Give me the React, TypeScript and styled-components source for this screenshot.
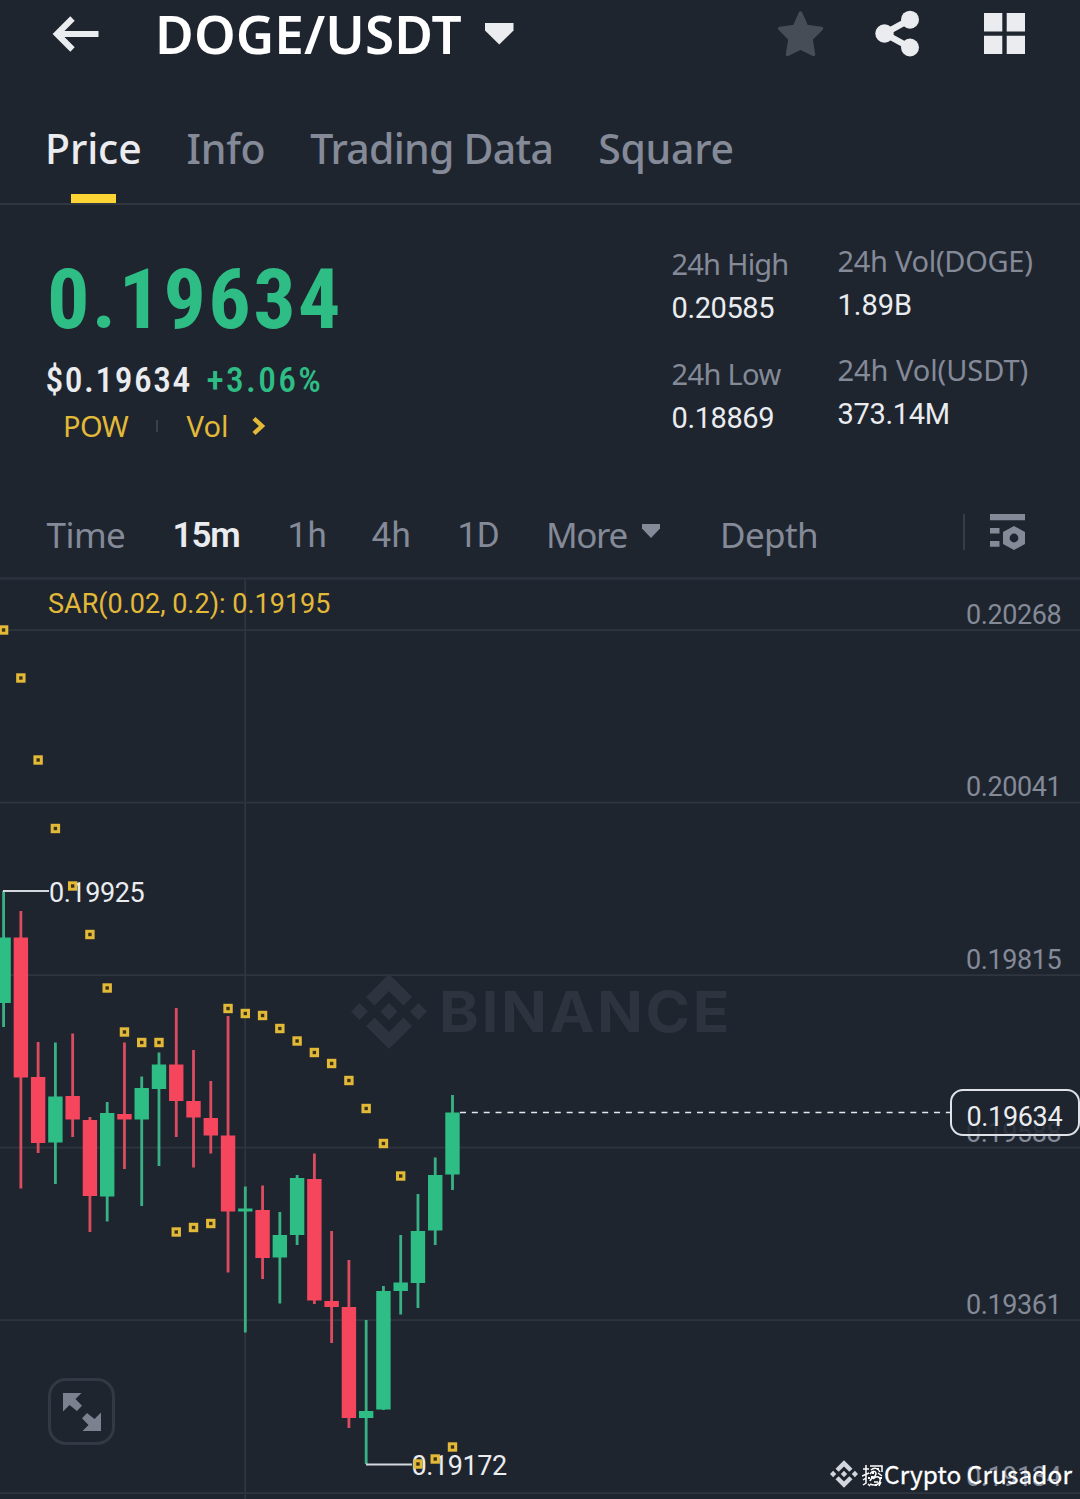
import React from "react";
import styled, { createGlobalStyle, css } from "styled-components";

const color = {
  bg: "#1f252f",
  line: "#2f353f",
  text: "#eaecef",
  bright: "#ffffff",
  muted: "#848a97",
  green: "#2ebd85",
  red: "#f6465d",
  gold: "#e3b938",
  accent: "#fcd535",
  mark: "#2d343f",
};

const sans = `"Noto Sans", "Open Sans", sans-serif`;
const digits = `Roboto, "Noto Sans", sans-serif`;

const GlobalStyle = createGlobalStyle`
  body { margin: 0; background: ${color.bg}; }
  * { box-sizing: border-box; }
`;

const Screen = styled.main`
  width: 1080px;
  height: 1499px;
  overflow: hidden;
  display: flex;
  flex-direction: column;
  background: ${color.bg};
  color: ${color.text};
  font-family: ${sans};
  white-space: nowrap;
`;

const Header = styled.header`
  height: 68px;
  display: flex;
  align-items: center;
  padding: 0 54px 0 52px;
`;

const PairName = styled.h1`
  margin: 0 23.5px 0 55px;
  font-size: 53px;
  line-height: 68px;
  font-weight: 600;
  letter-spacing: 0.1px;
  color: ${color.bright};
`;

const HeaderActions = styled.div`
  margin-left: auto;
  display: flex;
  align-items: center;
`;

const ActionIcon = styled.svg<{ $gap?: number }>`
  display: block;
  margin-left: ${(p) => p.$gap ?? 0}px;
`;

const Tabs = styled.nav`
  height: 137px;
  display: flex;
  gap: 45px;
  padding: 51.5px 45px 0;
  border-bottom: 2px solid #313741;
`;

const Tab = styled.a<{ $active?: boolean; $spacing?: number }>`
  display: flex;
  flex-direction: column;
  align-items: center;
  justify-content: space-between;
  font-size: 41px;
  line-height: 56px;
  font-weight: 500;
  letter-spacing: ${(p) => p.$spacing ?? 0}px;
  color: ${(p) => (p.$active ? color.text : color.muted)};
`;

const TabIndicator = styled.span`
  width: 45px;
  height: 9px;
  background: ${color.accent};
`;

const Summary = styled.section`
  height: 275px;
  display: flex;
  padding-left: 47px;
`;

const PriceColumn = styled.div`
  width: 624.5px;
  padding-top: 46px;
`;

const LastPrice = styled.div`
  font-family: ${digits};
  font-stretch: 75%;
  font-size: 84px;
  line-height: 98px;
  font-weight: 700;
  letter-spacing: 2.4px;
  color: ${color.green};
`;

const FiatRow = styled.div`
  display: flex;
  margin: 9.5px 0 0 -1.5px;
  font-family: ${digits};
  font-stretch: 75%;
  font-size: 35.5px;
  line-height: 42px;
  font-weight: 500;
`;

const FiatPrice = styled.span`
  width: 161px;
  letter-spacing: 1.5px;
`;

const Change = styled.span`
  color: ${color.green};
  letter-spacing: 2.3px;
`;

const TagRow = styled.div`
  display: flex;
  align-items: center;
  margin: 5.3px 0 0 16px;
  font-size: 29px;
  line-height: 40px;
  color: ${color.gold};
`;

const TagName = styled.span<{ $spacing?: number }>`
  letter-spacing: ${(p) => p.$spacing ?? 0}px;
`;

const TagDivider = styled.span`
  width: 2px;
  height: 12px;
  margin: 0 28.5px 0 28px;
  background: #3a404b;
`;

const StatColumn = styled.dl<{ $top: number; $width?: number }>`
  margin: 0;
  width: ${(p) => p.$width ?? 240}px;
  padding-top: ${(p) => p.$top}px;
`;

const StatLabel = styled.dt<{ $spacing: number; $above?: number }>`
  font-size: 29px;
  line-height: 40px;
  color: ${color.muted};
  letter-spacing: ${(p) => p.$spacing}px;
  margin-top: ${(p) => p.$above ?? 0}px;
`;

const StatValue = styled.dd<{ $spacing?: number }>`
  margin: 6.7px 0 0;
  font-family: ${digits};
  font-size: 29px;
  line-height: 34px;
  letter-spacing: ${(p) => p.$spacing ?? -0.4}px;
  color: ${color.text};
`;

const Intervals = styled.nav`
  height: 97px;
  display: flex;
  padding: 31px 54px 0 46.5px;
`;

const Interval = styled.a<{ $width: number; $digits?: boolean; $active?: boolean; $spacing?: number }>`
  width: ${(p) => p.$width}px;
  display: flex;
  align-items: baseline;
  font-size: 35px;
  line-height: 48px;
  letter-spacing: ${(p) => p.$spacing ?? 0}px;
  color: ${(p) => (p.$active ? color.text : color.muted)};
  ${(p) =>
    p.$digits &&
    css`
      font-family: ${digits};
      padding-top: 1.4px;
    `}
  ${(p) => p.$active && css`font-weight: 600;`}
`;

const CaretDown = styled.svg`
  display: block;
  margin-left: 15px;
  align-self: flex-start;
  margin-top: 13px;
`;

const Settings = styled.div`
  margin-left: auto;
  height: 36px;
  margin-top: 3px;
  display: flex;
  gap: 25px;
  align-items: center;
`;

const SettingsDivider = styled.span`
  width: 2px;
  height: 36px;
  background: #373d48;
`;

const ChartPanel = styled.section`
  position: relative;
  height: 922px;
`;

const ChartSvg = styled.svg`
  display: block;
`;

const AxisText = styled.text<{ $spacing?: number }>`
  font-family: ${digits};
  font-size: 27px;
  letter-spacing: ${(p) => p.$spacing ?? -0.4}px;
`;

const Wordmark = styled.text`
  font-family: Inter, "Noto Sans", sans-serif;
  font-size: 56.5px;
  font-weight: 700;
  letter-spacing: 2.4px;
  fill: ${color.mark};
`;

const PriceTag = styled.div`
  position: absolute;
  left: 949.5px;
  top: 512px;
  width: 130px;
  height: 47px;
  padding: 10px 0 0 15px;
  border: 2px solid #dfe2e8;
  border-radius: 13px;
  background: rgba(31, 37, 47, 0.86);
  font-family: ${digits};
  font-size: 27px;
  line-height: 32px;
  letter-spacing: -0.35px;
  color: ${color.text};
`;

const ExpandButton = styled.button`
  position: absolute;
  left: 48px;
  top: 801px;
  width: 67px;
  height: 67px;
  padding: 0;
  display: grid;
  place-items: center;
  border: 3px solid #323944;
  border-radius: 18px;
  background: transparent;
`;

const Credit = styled.div`
  position: absolute;
  left: 830px;
  top: 879px;
  display: flex;
  align-items: center;
  height: 36px;
  font-family: "Noto Sans CJK SC", "Noto Sans", sans-serif;
  font-size: 24.4px;
  font-weight: 400;
  line-height: 36px;
  letter-spacing: 0.1px;
  color: #ffffff;
  -webkit-text-stroke: 0.3px #ffffff;
`;

const CreditGlyph = styled.svg`
  display: block;
  margin: 2px 1px 0 4px;
`;

type Candle = [up: 0 | 1, high: number, low: number, top: number, bottom: number];

const candles: Candle[] = [
  [1, 891, 1027, 937.5, 1003],
  [0, 911, 1188.5, 937.5, 1077.5],
  [0, 1042, 1153, 1077, 1143],
  [1, 1042.5, 1184, 1096.5, 1142.5],
  [0, 1033.5, 1137, 1096, 1119.5],
  [0, 1117, 1232, 1120, 1196],
  [1, 1102, 1221.5, 1113, 1196.5],
  [0, 1042.5, 1169, 1114, 1119.5],
  [1, 1076.5, 1206, 1088, 1119.5],
  [1, 1052.5, 1166, 1064.5, 1089],
  [0, 1008, 1137, 1064.5, 1101],
  [0, 1050, 1167.5, 1101, 1117.5],
  [0, 1081, 1153.5, 1118, 1135.5],
  [0, 1016, 1272.5, 1135.5, 1211.5],
  [1, 1186.5, 1332.5, 1208.5, 1211.5],
  [0, 1185.5, 1279, 1210, 1258],
  [1, 1212, 1303.5, 1235, 1257.5],
  [1, 1175, 1245, 1178, 1235],
  [0, 1153.5, 1304, 1179, 1300.5],
  [0, 1231, 1343, 1301, 1307],
  [0, 1260, 1428, 1307, 1418],
  [1, 1320, 1464, 1411, 1418],
  [1, 1286, 1410, 1291, 1409.5],
  [1, 1235, 1314.5, 1282.5, 1291],
  [1, 1194, 1308, 1231, 1283],
  [1, 1157.5, 1245, 1175, 1230.5],
  [1, 1095, 1190, 1112.5, 1174.5],
];

const sar = [
  630, 678, 760, 828.5, 886, 934.5, 988, 1032, 1042.5, 1042.5, 1232, 1227.5, 1223.5, 1008.5,
  1013.5, 1015.5, 1028.5, 1041, 1052.5, 1063.5, 1080.5, 1108.5, 1143.5, 1176, 1464, 1459, 1447,
];

const axis: [label: string, y: number][] = [
  ["0.20268", 624],
  ["0.20041", 796],
  ["0.19815", 969],
  ["0.19588", 1142],
  ["0.19361", 1314],
  ["0.19134", 1486],
];

const gridLines = [630, 802.5, 975, 1147.5, 1320, 1493];

const candleX = (i: number) => 3.6 + i * 17.265;

function BinanceDiamond() {
  return (
    <>
      <path d="M0-37.5 23-14.5 14.5-6 0-20.5-14.5-6-23-14.5Z" />
      <path d="M0 37.5 23 14.5 14.5 6 0 20.5-14.5 6-23 14.5Z" />
      <path d="M0-8.5 8.5 0 0 8.5-8.5 0Z" />
      <path d="M-29.5-8.5-21 0-29.5 8.5-38 0Z" />
      <path d="M29.5-8.5 38 0 29.5 8.5 21 0Z" />
    </>
  );
}

function Chart() {
  return (
    <ChartSvg width="1080" height="922" viewBox="0 577 1080 922">
      <rect x="0" y="577" width="1080" height="3" fill="#2a303b" />
      {gridLines.map((y) => (
        <rect key={y} x="0" y={y - 0.8} width="1080" height="1.8" fill={color.line} />
      ))}
      <rect x="244.3" y="580" width="1.8" height="919" fill={color.line} />

      <g transform="translate(389 1011.5)" fill={color.mark}>
        <BinanceDiamond />
      </g>
      <Wordmark x="439" y="1032" textLength="293" lengthAdjust="spacingAndGlyphs">
        BINANCE
      </Wordmark>

      {axis.map(([label, y]) => (
        <AxisText key={label} x="966" y={y} fill={color.muted}>
          {label}
        </AxisText>
      ))}

      {candles.map(([up, high, low, top, bottom], i) => (
        <g key={i} fill={up ? color.green : color.red}>
          <rect
            x={candleX(i) - 1.4}
            y={high}
            width="2.8"
            height={low - high}
            fill={up ? "#38b284" : "#dc4c60"}
          />
          <rect x={candleX(i) - 7.2} y={top} width="14.4" height={bottom - top} />
        </g>
      ))}

      <rect x="3" y="890" width="46" height="2" fill="#d5d8de" />
      <AxisText x="49" y="902" fill={color.text}>0.19925</AxisText>
      <rect x="366" y="1463.5" width="46" height="2" fill="#d5d8de" />
      <AxisText x="411.5" y="1475" fill={color.text}>0.19172</AxisText>

      {sar.map((y, i) => (
        <rect
          key={i}
          x={candleX(i) - 3.2}
          y={y - 3.2}
          width="6.4"
          height="6.4"
          fill="#3a3118"
          stroke={color.gold}
          strokeWidth="3"
        />
      ))}

      <path d="M460 1112.5H950" stroke="#e4e7ec" strokeWidth="1.6" strokeDasharray="6 5.85" />
      <AxisText $spacing={0} x="48" y="613" fill={color.gold}>SAR(0.02, 0.2): 0.19195</AxisText>
    </ChartSvg>
  );
}

export default function App() {
  return (
    <Screen>
      <GlobalStyle />
      <Header>
        <svg width="48" height="36" viewBox="52 15.5 48 36">
          <path d="M98.5 33.5H58M72.5 18 57 33.5 72.5 49" fill="none" stroke={color.text} strokeWidth="6.2" />
        </svg>
        <PairName>DOGE/USDT</PairName>
        <svg width="29" height="22" viewBox="0 0 29 22">
          <path d="M0 0H28.5V7.5L14.25 21.5 0 7.5Z" fill={color.text} />
        </svg>
        <HeaderActions>
          <ActionIcon width="46" height="47" viewBox="778 10.5 46 47">
            <path
              d="M800.5 12.5 806.5 26 821.5 28 811 38.5 813.5 54 800.5 47.5 787.5 54 790 38.5 779.8 28 794.5 26Z"
              fill="#474d57"
              stroke="#474d57"
              strokeWidth="3.5"
              strokeLinejoin="round"
            />
          </ActionIcon>
          <ActionIcon $gap={51} width="45" height="48" viewBox="875 10 45 48">
            <path d="M910 19.5 884.5 33.5 910 47.5" fill="none" stroke={color.text} strokeWidth="6.5" />
            <circle cx="884.5" cy="33.5" r="9.2" fill={color.text} />
            <circle cx="910" cy="19.7" r="9" fill={color.text} />
            <circle cx="910" cy="47.5" r="9" fill={color.text} />
          </ActionIcon>
          <ActionIcon $gap={64} width="42" height="42" viewBox="0 0 42 42">
            <path d="M0 0H18.3V18.5H0ZM22.7 0H41V18.5H22.7ZM0 22.7H18.3V41H0ZM22.7 22.7H41V41H22.7Z" fill={color.text} />
          </ActionIcon>
        </HeaderActions>
      </Header>

      <Tabs>
        <Tab $active $spacing={-0.1}>
          Price
          <TabIndicator />
        </Tab>
        <Tab $spacing={-0.3}>Info</Tab>
        <Tab $spacing={-0.75}>Trading Data</Tab>
        <Tab $spacing={-0.25}>Square</Tab>
      </Tabs>

      <Summary>
        <PriceColumn>
          <LastPrice>0.19634</LastPrice>
          <FiatRow>
            <FiatPrice>$0.19634</FiatPrice>
            <Change>+3.06%</Change>
          </FiatRow>
          <TagRow>
            <TagName $spacing={-0.6}>POW</TagName>
            <TagDivider />
            <TagName>Vol</TagName>
            <svg width="38" height="20" viewBox="0 0 38 20">
              <path d="M26 2.5 34 10 26 17.5" fill="none" stroke={color.gold} strokeWidth="4.4" />
            </svg>
          </TagRow>
        </PriceColumn>
        <StatColumn $top={39.4} $width={166}>
          <StatLabel $spacing={-0.8}>24h High</StatLabel>
          <StatValue>0.20585</StatValue>
          <StatLabel $spacing={-0.65} $above={29.3}>24h Low</StatLabel>
          <StatValue>0.18869</StatValue>
        </StatColumn>
        <StatColumn $top={36}>
          <StatLabel $spacing={-0.3}>24h Vol(DOGE)</StatLabel>
          <StatValue $spacing={0}>1.89B</StatValue>
          <StatLabel $spacing={-0.06} $above={28.3}>24h Vol(USDT)</StatLabel>
          <StatValue $spacing={-0.3}>373.14M</StatValue>
        </StatColumn>
      </Summary>

      <Intervals>
        <Interval $width={126} $spacing={-0.55}>Time</Interval>
        <Interval $width={115} $digits $active $spacing={-1.1}>15m</Interval>
        <Interval $width={84} $digits $spacing={0.3}>1h</Interval>
        <Interval $width={86} $digits $spacing={0.3}>4h</Interval>
        <Interval $width={88.5} $digits $spacing={-0.4}>1D</Interval>
        <Interval $width={174} $spacing={-1.4}>
          More
          <CaretDown width="18" height="14" viewBox="0 0 18 14">
            <path d="M0 0H18V4.5L9 14 0 4.5Z" fill={color.muted} />
          </CaretDown>
        </Interval>
        <Interval $width={120} $spacing={-0.6}>Depth</Interval>
        <Settings>
          <SettingsDivider />
          <svg width="36" height="36" viewBox="0 0 36 36" fill={color.muted}>
            <path d="M0 0H35V6.3H0ZM0 14H9.5V19.5H0ZM0 27H9.5V32.8H0Z" />
            <path fillRule="evenodd" d="M24 12 35 18V30L24 36 13 30V18ZM24 19.6A4.4 4.4 0 1 0 24 28.4 4.4 4.4 0 1 0 24 19.6Z" />
          </svg>
        </Settings>
      </Intervals>

      <ChartPanel>
        <Chart />
        <PriceTag>0.19634</PriceTag>
        <ExpandButton>
          <svg width="38" height="38" viewBox="0 0 38 38" fill="#7b818e">
            <path d="M0 0H18.5L12.5 6 19 12.8 14 18 6.5 12 0 18.5Z" />
            <path d="M38 38H19.5L25.5 32 19 25.2 24 20 31.5 26 38 19.5Z" />
          </svg>
        </ExpandButton>
        <Credit>
          <svg width="28" height="28" viewBox="-38 -38 76 76" fill="#d3d6de">
            <BinanceDiamond />
          </svg>
          <CreditGlyph width="21" height="23" viewBox="0 0 21 23" fill="none" stroke="#fff" strokeWidth="1.5">
            <path d="M1 5H7M4 1V19L1 21M0 12 7 9M8 2H20V8M9 6C12 3 16 4 18 8M8 10C11 6 14 7 14 10S9 13 8 17M11 15C15 11 19 13 18 17S12 22 8 20M16 9 20 12M12 18H16M1 16 4 14M6 20 8 22M19 18 17 22" />
            <path d="M10 9H12M15 5H17M6 14H8M13 21H15M17 14H20M9 13H11" strokeWidth="2" />
          </CreditGlyph>
          Crypto Crusador
        </Credit>
      </ChartPanel>
    </Screen>
  );
}
